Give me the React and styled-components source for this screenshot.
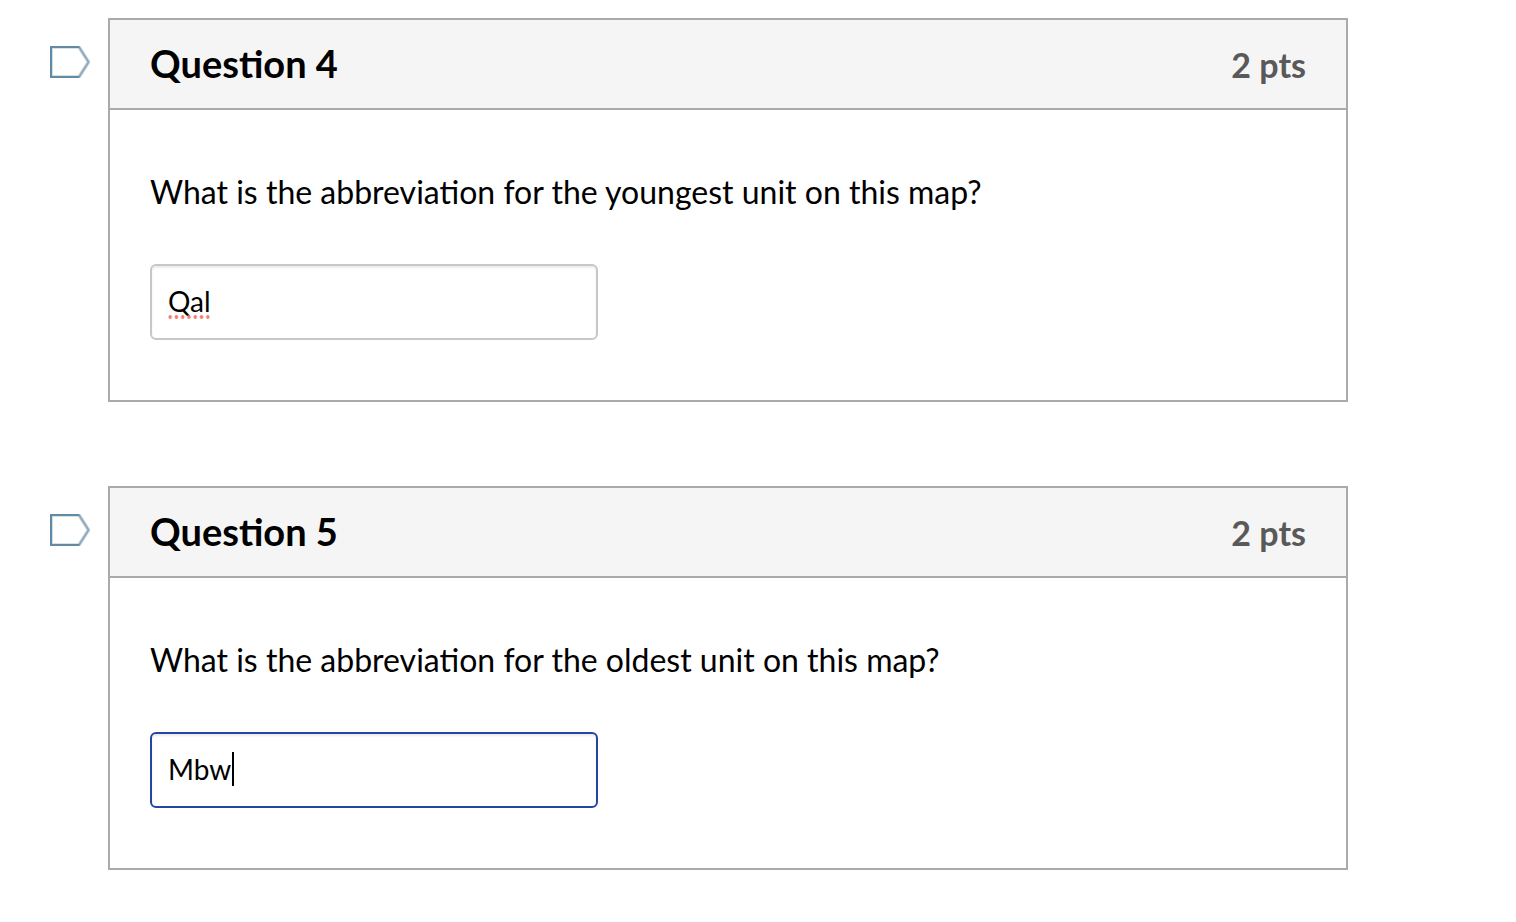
import React, { useEffect, useRef, useState } from "react";
import styled, { createGlobalStyle } from "styled-components";

const questions = [
  {
    id: 4,
    points: 2,
    text: "What is the abbreviation for the youngest unit on this map?",
    answer: "Qal",
    misspelled: true,
  },
  {
    id: 5,
    points: 2,
    text: "What is the abbreviation for the oldest unit on this map?",
    answer: "Mbw",
    active: true,
  },
];

const TEXT_LEFT = 18;

const measure = (text) => {
  const context = document.createElement("canvas").getContext("2d");
  context.font = "28px Lato, sans-serif";
  return Math.round(context.measureText(text).width);
};

const FlagIcon = () => (
  <svg width="42" height="34" viewBox="0 0 42 34" fill="none" aria-hidden="true">
    <path d="M31 3.2H4.2V30.8H31" stroke="#c9d8e1" strokeWidth="1.2" />
    <path d="M31 2L40.6 17L31 32" stroke="#c3d2dc" strokeWidth="3.4" />
    <path d="M31 2L40.6 17L31 32" stroke="#8ca8ba" strokeWidth="1.6" />
    <path d="M31.5 2H3V32H31.5" stroke="#6489a4" strokeWidth="2" />
  </svg>
);

const Question = ({ question }) => {
  const [answer, setAnswer] = useState(question.answer);
  const [flagged, setFlagged] = useState(false);
  const [focused, setFocused] = useState(false);
  const [cursor, setCursor] = useState(question.answer.length);
  const inputRef = useRef(null);

  useEffect(() => {
    if (question.active) {
      inputRef.current.focus();
      inputRef.current.setSelectionRange(answer.length, answer.length);
    }
  }, []);

  const handleChange = (e) => {
    setAnswer(e.target.value);
    setCursor(e.target.selectionEnd);
  };

  const inputId = `question_${question.id}`;
  const misspelled = question.misspelled && answer === question.answer;

  return (
    <Row>
      <FlagButton
        type="button"
        aria-label={`Flag question ${question.id}`}
        aria-pressed={flagged}
        onClick={() => setFlagged(!flagged)}
      >
        <FlagIcon />
      </FlagButton>
      <Card>
        <Header>
          <Title>Question {question.id}</Title>
          <Points>{question.points} pts</Points>
        </Header>
        <Body>
          <Prompt htmlFor={inputId}>{question.text}</Prompt>
          <Field>
            <AnswerInput
              ref={inputRef}
              id={inputId}
              type="text"
              autoComplete="off"
              spellCheck={false}
              value={answer}
              onChange={handleChange}
              onSelect={(e) => setCursor(e.target.selectionEnd)}
              onFocus={() => setFocused(true)}
              onBlur={() => setFocused(false)}
            />
            {misspelled && <SpellingDots style={{ width: measure(answer) + 1 }} />}
            {focused && (
              <Caret
                style={{ left: TEXT_LEFT + measure(answer.slice(0, cursor)) + 1 }}
              />
            )}
          </Field>
        </Body>
      </Card>
    </Row>
  );
};

const App = () => (
  <>
    <GlobalStyle />
    <Quiz>
      {questions.map((question) => (
        <Question key={question.id} question={question} />
      ))}
    </Quiz>
  </>
);

// Styled Components
const GlobalStyle = createGlobalStyle`
  * {
    box-sizing: border-box;
  }

  body {
    margin: 0;
    background: #fff;
    color: #000;
    font-family: Lato, sans-serif;
  }
`;

const Quiz = styled.main`
  display: flex;
  flex-direction: column;
  gap: 84px;
  padding: 18px 168px 52px 48px;
`;

const Row = styled.section`
  display: flex;
  align-items: flex-start;
  gap: 18px;
`;

const FlagButton = styled.button`
  display: flex;
  flex-shrink: 0;
  margin: 27px 0 0;
  padding: 0;
  border: none;
  background: none;
  cursor: pointer;
`;

const Card = styled.div`
  flex: 1;
  min-width: 0;
  border: 2px solid #aaa;
`;

const Header = styled.header`
  display: flex;
  align-items: flex-start;
  justify-content: space-between;
  padding: 19px 40px 17px;
  background: #f5f5f5;
  border-bottom: 2px solid #aaa;
`;

const Title = styled.h2`
  margin: 0;
  font-size: 38px;
  line-height: 48px;
  font-weight: 700;
`;

const Points = styled.span`
  color: #595959;
  font-size: 34px;
  line-height: 52px;
  font-weight: 700;
`;

const Body = styled.div`
  display: flex;
  flex-direction: column;
  align-items: flex-start;
  gap: 48px;
  padding: 58px 40px 60px;
`;

const Prompt = styled.label`
  font-size: 32px;
  line-height: 48px;
`;

const Field = styled.div`
  position: relative;
  width: 448px;
  max-width: 100%;
`;

const AnswerInput = styled.input`
  display: block;
  width: 100%;
  height: 76px;
  padding: 0 16px 2px;
  border: 2px solid #c7c7c7;
  border-radius: 6px;
  background: #fff;
  box-shadow: inset 0 2px 2px rgba(0, 0, 0, 0.08);
  color: #000;
  caret-color: transparent;
  font-family: inherit;
  font-size: 28px;
  outline: none;

  &:focus {
    border-color: #2446a0;
  }
`;

const SpellingDots = styled.span`
  position: absolute;
  top: 51px;
  left: 17px;
  height: 4px;
  background-image: radial-gradient(circle closest-side, #f67b72 80%, transparent);
  background-size: 6px 4px;
  background-repeat: round no-repeat;
  pointer-events: none;
`;

const Caret = styled.span`
  position: absolute;
  top: 20px;
  width: 2px;
  height: 34px;
  background: #000;
  pointer-events: none;
`;

export default App;
